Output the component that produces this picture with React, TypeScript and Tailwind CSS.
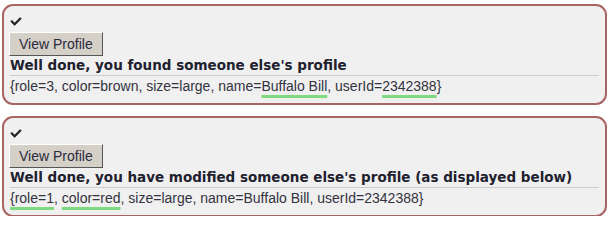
import React from "react";

function Check() {
  return (
    <svg viewBox="0 0 512 512" className="w-[12px] h-[11px] fill-[#222]">
      <path d="M173.898 439.404l-166.4-166.4c-9.997-9.997-9.997-26.206 0-36.204l36.203-36.204c9.997-9.998 26.207-9.998 36.204 0L192 312.69 432.095 72.596c9.997-9.997 26.207-9.997 36.204 0l36.203 36.204c9.997 9.997 9.997 26.206 0 36.204l-294.4 294.401c-9.998 9.997-26.207 9.997-36.204-.001z" />
    </svg>
  );
}

function Mark({ children }: { children: React.ReactNode }) {
  return (
    <span className="underline decoration-[#7fd97f] decoration-[3px] underline-offset-[4px] [text-decoration-skip-ink:none]">
      {children}
    </span>
  );
}

function Panel({ title, data }: { title: string; data: React.ReactNode }) {
  return (
    <div className="border-2 border-[#a86464] rounded-[11px] bg-[#f0f0f0] px-[6px] pt-[10px] pb-[6px]">
      <Check />
      <button className="block -ml-[1px] mt-[5px] h-[24px] px-[9px] bg-[#d4d0c8] text-[14px] text-[#2b2b3b] border border-t-white border-l-white border-r-[#555] border-b-[#555] font-['Liberation_Sans',Arial,sans-serif] leading-none">
        View Profile
      </button>
      <div className="font-['DejaVu_Sans',Verdana,sans-serif] font-bold text-[13.5px] text-[#20202e] leading-[18px] pb-[1px] border-b border-[#cccccc]">
        {title}
      </div>
      <div className="font-['Liberation_Sans',Arial,sans-serif] text-[14px] text-[#333340] leading-[18px] pt-[1px] pb-[2px]">
        {data}
      </div>
    </div>
  );
}

export default function App() {
  return (
    <div className="w-[610px] h-[216px] bg-white pt-[4px] pl-[2px] pr-[3px] flex flex-col gap-[11px]">
      <Panel
        title="Well done, you found someone else's profile"
        data={
          <>
            {"{role=3, color=brown, size=large, name="}
            <Mark>Buffalo Bill</Mark>
            {", userId="}
            <Mark>2342388</Mark>
            {"}"}
          </>
        }
      />
      <Panel
        title="Well done, you have modified someone else's profile (as displayed below)"
        data={
          <>
            <Mark>{"{role=1"}</Mark>
            {", "}
            <Mark>color=red</Mark>
            {", size=large, name=Buffalo Bill, userId=2342388}"}
          </>
        }
      />
    </div>
  );
}
